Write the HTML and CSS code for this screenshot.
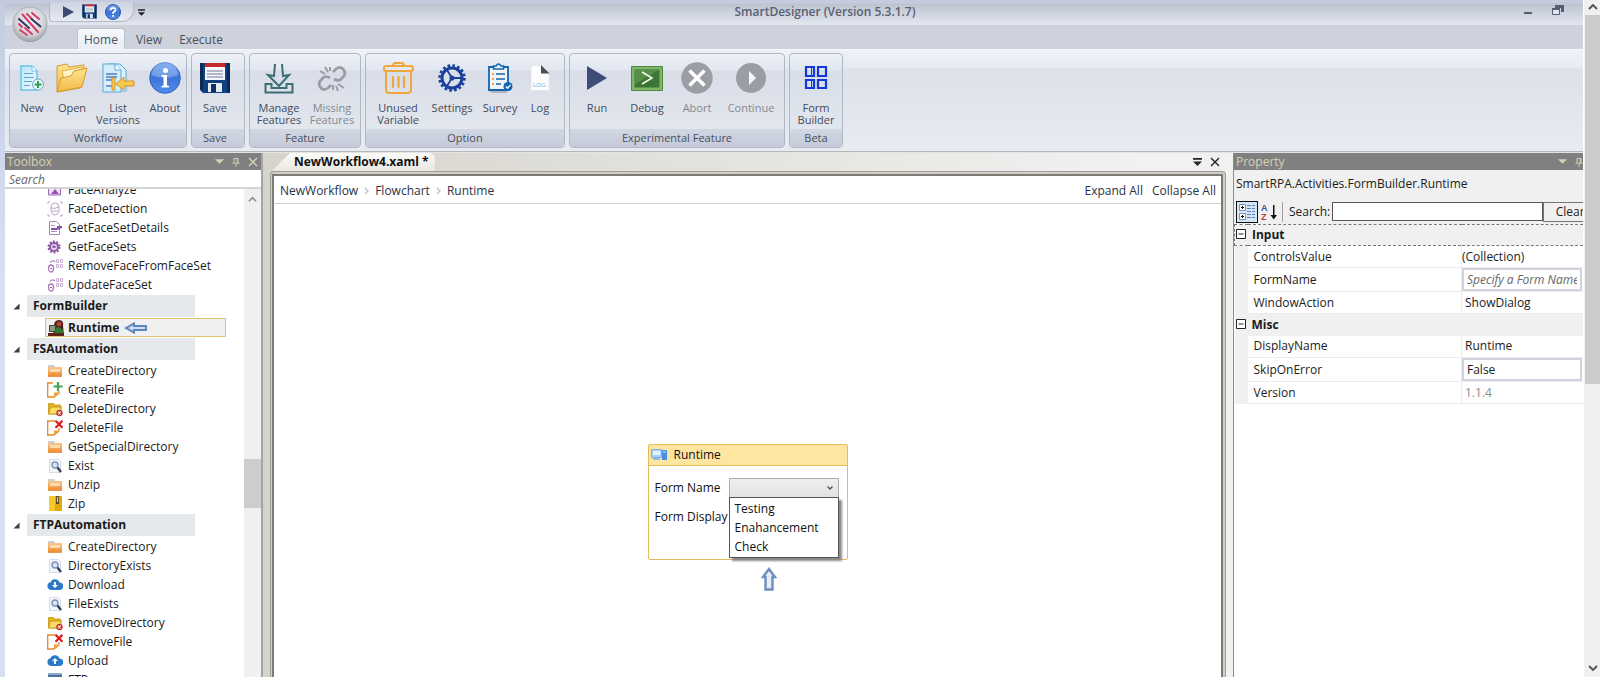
FILE: index.html
```html
<!DOCTYPE html>
<html lang="en">
<head>
<meta charset="utf-8">
<title>SmartDesigner (Version 5.3.1.7)</title>
<link rel="stylesheet" href="styles.css">
</head>
<body>
<svg class="defs" aria-hidden="true">
  <defs>
    <linearGradient id="gFolder" x1="0" y1="0" x2="0" y2="1"><stop offset="0" stop-color="#fde48c"/><stop offset="1" stop-color="#f2b94a"/></linearGradient>
    <linearGradient id="gOrange" x1="0" y1="0" x2="0" y2="1"><stop offset="0" stop-color="#fbc68a"/><stop offset="1" stop-color="#f08c30"/></linearGradient>
    <linearGradient id="gBlue" x1="0" y1="0" x2="0" y2="1"><stop offset="0" stop-color="#7aa6ee"/><stop offset=".5" stop-color="#3f73d8"/><stop offset="1" stop-color="#4f8df0"/></linearGradient>
    <linearGradient id="gSheet" x1="0" y1="0" x2="1" y2="1"><stop offset="0" stop-color="#b9e6fa"/><stop offset="1" stop-color="#f2fbff"/></linearGradient>
    <radialGradient id="gOrb" cx=".5" cy=".4" r=".6"><stop offset="0" stop-color="#f4f4f6"/><stop offset=".7" stop-color="#d2d4d8"/><stop offset="1" stop-color="#a0a3a8"/></radialGradient>
    <symbol id="floppy" viewBox="0 0 32 32"><path fill="#11407e" d="M1 1h30v30H4l-3-3z"/><path fill="#0a2a58" d="M28 1h3v30h-3zM1 1h3v27l-3-1z"/><path fill="#f4f6fa" d="M6 2h20v16H6z"/><path fill="#c8292e" d="M6 1h20v4H6z"/><path stroke="#9aa4b8" stroke-width="1.4" d="M8 9h16M8 12h16M8 15h16"/><path fill="#e6ebf2" d="M9 21h14v9H9z"/><path fill="#12305e" d="M12 22h5v8h-5z"/></symbol>
    <symbol id="folder" viewBox="0 0 16 16"><path fill="#c9ced6" d="M1 2h6l1 2h7v8H1z"/><path fill="url(#gOrange)" d="M1 4h14v9H1z"/><path fill="#fbdcb0" d="M3 6h10v3H3z"/><path stroke="#e89850" d="M1 13.500h14"/></symbol>
    <symbol id="folderx" viewBox="0 0 16 16"><path fill="#e5b51f" stroke="#cfa22a" d="M1.500 2.500h5l1 1.500h6v9h-12z"/><path fill="#fbdc63" stroke="#c79a1c" d="M1.500 13l2-7h11l-1.500 7z"/><circle cx="12.500" cy="12" r="3.200" fill="#c9362c"/><path stroke="#fff" stroke-width="1.100" d="M11.200 10.700l2.600 2.600m0-2.600l-2.600 2.600"/></symbol>
    <symbol id="filex" viewBox="0 0 16 16"><path fill="#fff" stroke="#e8872a" stroke-width="1.300" d="M8 1H.700v14H7l5-4V8"/><path fill="#f0a040" d="M7 15.500v-5h6z"/><path stroke="#d8161c" stroke-width="2.200" d="M8.500 .800l7 7M15.500 .800l-7 7"/></symbol>
    <symbol id="fileplus" viewBox="0 0 16 16"><path fill="#fff" stroke="#e8872a" stroke-width="1.300" d="M6 1H.700v14H7l5-4V9"/><path fill="#f0a040" d="M7 15.500v-5h6z"/><path stroke="#3fa654" stroke-width="2.200" d="M11 0v9M6.500 4.500h9"/></symbol>
    <symbol id="find" viewBox="0 0 16 16"><path fill="#f2f5f9" stroke="#d5dde8" d="M2.500 1.500h9l2 2v11h-11z"/><circle cx="8" cy="7" r="3" fill="#d6e5f7" stroke="#7f94b5" stroke-width="1.400"/><path stroke="#2c3e5c" stroke-width="2.200" d="M10.500 9.500L14 14"/></symbol>
    <symbol id="zip" viewBox="0 0 16 16"><path fill="#e0a90e" d="M2 0h13v15H2z"/><path fill="#f7c92b" d="M2 0h6v15H2z"/><path fill="#5a4c2c" d="M9 0h3v8H9z"/><path fill="#d9d2bd" d="M10 1h1v5h-1z"/></symbol>
    <symbol id="cloud" viewBox="0 0 16 16"><path fill="#2a7acb" d="M4 13a3.900 3.900 0 0 1-.500-7.700A4.800 4.800 0 0 1 12.500 5.600 3.700 3.700 0 0 1 12.500 13z"/></symbol>
    <symbol id="remap" viewBox="0 0 16 16"><g fill="none" stroke="#c9b0d4"><path d="M9.500 1.500h2v3h-2zM13.500 1.500h2v3h-2zM9.500 6.500h2v3h-2zM13.500 6.500h2v3h-2z"/><ellipse cx="4" cy="10.500" rx="2.500" ry="3.500" stroke="#a477b6" stroke-width="1.300"/><path stroke="#8e5fa6" d="M3 4.500q2-3 5-1M3 10.500h2"/></g></symbol>
    <symbol id="chevup" viewBox="0 0 10 10"><path fill="none" stroke="currentColor" stroke-width="1.800" d="M1 7l4-4 4 4"/></symbol>
    <symbol id="pin" viewBox="0 0 10 12"><path fill="none" stroke="currentColor" stroke-width="1.200" d="M2.500 7V1.500h5V7M.500 7.500h9M5 7.500V12M6.500 2v5"/></symbol>
    <symbol id="cross" viewBox="0 0 10 10"><path stroke="currentColor" stroke-width="1.400" d="M1 1l8 8M9 1L1 9"/></symbol>
    <symbol id="tri" viewBox="0 0 8 8"><path fill="#404040" d="M7.500 .500v7h-7z"/></symbol>
    <symbol id="down" viewBox="0 0 8 4"><path fill="currentColor" d="M0 0h8L4 4z"/></symbol>
    <symbol id="menu" viewBox="0 0 10 9"><path fill="currentColor" d="M0 0h10v2H0zM0 4h10L5 9z"/></symbol>
  </defs>
</svg>
<div class="screen">
  <div class="window">
    <header class="titlebar">
      <div class="qat-area">
        <div class="qat">
          <button class="plain" aria-label="Run"><svg width="12" height="12" viewBox="0 0 12 12"><path fill="#3c4a74" d="M1 0l11 6-11 6z"/></svg></button>
          <button class="plain" aria-label="Save"><svg width="15" height="15"><use href="#floppy"/></svg></button>
          <button class="plain" aria-label="Help"><svg width="16" height="16" viewBox="0 0 16 16"><circle cx="8" cy="8" r="7.500" fill="url(#gBlue)" stroke="#2c56b4"/><path fill="none" stroke="#fff" stroke-width="1.800" d="M5.500 6.200Q5.700 3.800 8 3.800T10.500 6Q10.500 7.200 8.100 8.500V9.800"/><circle cx="8.100" cy="12" r="1.100" fill="#fff"/></svg></button>
        </div>
        <button class="plain" aria-label="Customize toolbar"><svg class="ink" width="7" height="7"><use href="#menu"/></svg></button>
      </div>
      <h1 class="title">SmartDesigner (Version 5.3.1.7)</h1>
      <div class="winbtns">
        <button class="plain" aria-label="Minimize"><svg width="9" height="12" viewBox="0 0 9 12"><path fill="#555d70" d="M0 7h8v2H0z"/></svg></button>
        <button class="plain" aria-label="Restore"><svg width="12" height="12" viewBox="0 0 12 12"><path fill="#555d70" d="M3 0h9v7H9V3H3z"/><path fill="#e2e6ee" stroke="#555d70" d="M.500 3.500h7v6h-7z"/><path fill="#555d70" d="M0 3h8v2H0z"/></svg></button>
      </div>
    </header>
    <button class="orb" aria-label="Application menu"><svg width="36" height="37" viewBox="0 0 36 37"><circle cx="18" cy="19" r="17" fill="#858a92"/><circle cx="18" cy="18" r="17" fill="url(#gOrb)" stroke="#aeb1b6"/><g stroke-width="2" stroke-linecap="round" stroke="#d63a6a"><path d="M10.500 8.500L26 26M15 8l5 5M20 7l7 6M7 18l3 3M8 24l7 5M13 22l7 6"/></g><g stroke-width="2" stroke-linecap="round" stroke="#2e3a5c"><path d="M7 13l10 9M19.500 13l9 7.500"/></g></svg></button>
    <nav class="tabs">
      <button class="tab active">Home</button>
      <button class="tab">View</button>
      <button class="tab">Execute</button>
    </nav>
    <div class="ribbon">
      <section class="group">
        <div class="cmds lead">
          <button class="cmd w40"><svg width="32" height="32" viewBox="0 0 32 32"><path fill="url(#gSheet)" stroke="#6fc3e6" stroke-width="1.500" d="M5 4h11l5 5v19H5z"/><path fill="#fff" stroke="#6fc3e6" d="M16 4v5h5"/><path stroke="#5fa8cc" d="M8 11.500h9M8 15.500h10M8 19.500h8M8 23.500h6"/><circle cx="22" cy="22.500" r="5.500" fill="#e8f6fb" stroke="#68a8c8"/><path stroke="#2fa04c" stroke-width="2" d="M22 19v7M18.500 22.500h7"/></svg><span>New</span></button>
          <button class="cmd w40"><svg width="34" height="32" viewBox="0 0 34 32"><path fill="url(#gFolder)" stroke="#d79a32" d="M2 30V4l10-2 2 3 15-2 0 5-4 18z"/><path fill="#fff4c6" stroke="#e0b050" d="M7 9l20-4v8l-18 4z"/><path fill="url(#gFolder)" stroke="#d79a32" d="M2 30l4-14 10-2 3-5 13-3-5 19z"/></svg><span>Open</span></button>
          <button class="cmd w52"><svg width="34" height="32" viewBox="0 0 34 32"><path fill="url(#gSheet)" stroke="#5ca8d8" d="M8 2h11l6 6v21H8z"/><path fill="#d2ecfa" stroke="#5ca8d8" d="M2 2h12l6 6v22H2z"/><path fill="#fff" stroke="#5ca8d8" d="M14 2v6h6"/><path stroke="#4f7fc0" stroke-width="1.400" d="M5 12h11M5 15h11M5 18h8M5 24h6"/><path stroke="#e8eef4" stroke-width="3" d="M5 21h7"/><path fill="#fbc94a" stroke="#cf9430" d="M15 22l8-7v4h10v5H23v4zM11 16h3v12h-3z"/></svg><span>List<br>Versions</span></button>
          <button class="cmd w42"><svg width="32" height="32" viewBox="0 0 32 32"><circle cx="16" cy="16" r="15.300" fill="url(#gBlue)" stroke="#3460ba"/><path fill="#8db4f2" opacity=".6" d="M3 13a13 13 0 0 1 26 0q-13 6-26 0z"/><circle cx="16.500" cy="8.500" r="2.500" fill="#fff"/><path fill="#fff" d="M12.500 13H18v10.500l2 .500v1.500h-7.500V24l2-.500V15l-2-.500z"/></svg><span>About</span></button>
        </div>
        <div class="caption">Workflow</div>
      </section>
      <section class="group trail">
        <div class="cmds"><button class="cmd w46"><svg width="32" height="32"><use href="#floppy"/></svg><span>Save</span></button></div>
        <div class="caption">Save</div>
      </section>
      <section class="group">
        <div class="cmds pad2">
          <button class="cmd w54"><svg width="32" height="32" viewBox="0 0 32 32"><path fill="none" stroke="#3c6e74" stroke-width="2" d="M12 2L11 14l-6-1 11 11 10-11-6 1-1-12M2.500 22h6v4h15v-4h6v8.500h-27z"/></svg><span>Manage<br>Features</span></button>
          <button class="cmd w52 off"><svg width="32" height="32" viewBox="0 0 32 32"><g fill="none" stroke="#9a9da4" stroke-width="2.800"><path d="M17 10l3-3q4-3 7 0t1 7l-4 4q-3 1-6-1M15 23l-3 3q-4 3-7 0t-1-7l4-4q3-1 6 1"/><path stroke-width="2" d="M4 9l5 3M9 5l3 5M14 5v4M22 22l6 4M20 24l2 5M17 23v5"/></g></svg><span>Missing<br>Features</span></button>
        </div>
        <div class="caption">Feature</div>
      </section>
      <section class="group">
        <div class="cmds pad5">
          <button class="cmd w54"><svg width="32" height="32" viewBox="0 0 32 32"><g fill="none" stroke="#f0a63a" stroke-width="2"><rect x="2" y="4" width="29" height="5" rx="2"/><path d="M11 4q0-3 3-3h5q3 0 3 3M4 9v19q0 3 3 3h19q3 0 3-3V9"/><path stroke-width="2.200" d="M11 15v10M16.500 15v10M22 15v10" stroke-linecap="round"/></g></svg><span>Unused<br>Variable</span></button>
          <button class="cmd w54"><svg width="32" height="32" viewBox="0 0 32 32"><circle cx="16" cy="16" r="12.300" fill="none" stroke="#1a429c" stroke-width="3" stroke-dasharray="2.600 2.230"/><circle cx="16" cy="16" r="10" fill="none" stroke="#1a429c" stroke-width="3"/><circle cx="16" cy="16" r="2.600" fill="#1a429c"/><path stroke="#1a429c" stroke-width="1.800" d="M16 16h9M16 16l-5-8M16 16l-5 8"/></svg><span>Settings</span></button>
          <button class="cmd w42"><svg width="32" height="32" viewBox="0 0 32 32"><path fill="#b0b4bc" d="M5 29h18v2H8z"/><path fill="#f1f5fb" stroke="#1465ae" stroke-width="1.800" d="M5 5h19v23H5z"/><path fill="#f1f5fb" stroke="#1465ae" stroke-width="1.600" d="M9.500 7V4H12q2.500-4 5 0h2.500v3z"/><path stroke="#1465ae" stroke-width="1.500" d="M12 12h9M12 17h9M12 22h5"/><path stroke="#f0a040" stroke-width="2" d="M8 12h2M8 17h2M8 22h2"/><circle cx="24" cy="24.500" r="4.500" fill="#1465ae"/><path fill="none" stroke="#fff" stroke-width="1.300" d="M21.800 24.500l1.700 1.700 3-3.300"/></svg><span>Survey</span></button>
          <button class="cmd w38"><svg width="32" height="32" viewBox="0 0 32 32"><path fill="#fdfdfe" stroke="#e2e6ee" d="M7 3.500h10l8 8v17H7z"/><path fill="#4a4d54" d="M17 3l8.500 8.500H17z"/><text x="9" y="25" class="logtext">LOG</text></svg><span>Log</span></button>
        </div>
        <div class="caption">Option</div>
      </section>
      <section class="group">
        <div class="cmds pad3">
          <button class="cmd w48"><svg width="32" height="32" viewBox="0 0 32 32"><path fill="#3e4c78" d="M6 4l20 12L6 28z"/></svg><span>Run</span></button>
          <button class="cmd w52"><svg width="32" height="32" viewBox="0 0 32 32"><path fill="#7fb568" stroke="#4d8a3a" d="M.500 4.500h31v24H.500z"/><path fill="#3c7636" d="M3.500 7.500h25v18h-25z"/><path fill="#569048" d="M4 8h24L4 22z"/><path fill="none" stroke="#f2fbe8" stroke-width="1.600" d="M11 10l10 6-10 6"/></svg><span>Debug</span></button>
          <button class="cmd w48 off"><svg width="32" height="32" viewBox="0 0 32 32"><circle cx="16" cy="16" r="15.700" fill="#9a9da3"/><path stroke="#fff" stroke-width="3.600" d="M8.500 8.500l15 15M23.500 8.500l-15 15"/></svg><span>Abort</span></button>
          <button class="cmd w60 off"><svg width="32" height="32" viewBox="0 0 32 32"><circle cx="16" cy="16" r="15" fill="#9a9da3"/><path fill="#f4f6fa" d="M14 9l7 7-7 7z"/></svg><span>Continue</span></button>
        </div>
        <div class="caption">Experimental Feature</div>
      </section>
      <section class="group">
        <div class="cmds"><button class="cmd w52"><svg width="32" height="32" viewBox="0 0 32 32"><g fill="none" stroke="#1238e0" stroke-width="2.200"><path d="M6 5h8v9H6zM18 5h8v9h-8zM6 18h8v8H6zM18 18h8v8h-8z"/><path stroke-width="1" d="M11.500 6v8M11.500 18v8"/></g></svg><span>Form<br>Builder</span></button></div>
        <div class="caption">Beta</div>
      </section>
    </div>

    <main class="dock">
      <aside class="toolbox">
        <div class="panehead"><h2>Toolbox</h2>
          <button class="plain" aria-label="Options"><svg width="9" height="5"><use href="#down"/></svg></button>
          <button class="plain" aria-label="Pin"><svg width="8" height="10"><use href="#pin"/></svg></button>
          <button class="plain" aria-label="Close"><svg width="10" height="10"><use href="#cross"/></svg></button>
        </div>
        <input class="tbsearch" type="text" placeholder="Search" aria-label="Search toolbox">
        <div class="treebox">
          <div class="tree">
            <ul class="items">
              <li><svg viewBox="0 0 16 16"><path fill="#f0e4f4" stroke="#9c66b4" d="M1.500 2h12v11h-12z"/><path fill="#9c4fb4" d="M4 12l4-5 4 5zM7 4h2v3H7z"/></svg>FaceAnalyze</li>
              <li><svg viewBox="0 0 16 16"><g fill="none" stroke="#bfa3cb"><path d="M4 6q0-4 4-4t4 4v4q-1 4-4 4t-4-4zM4 7q4 1 8-1M5 10h6"/><path d="M1 3V1h2M13 1h2v2M1 13v2h2M13 15h2v-2"/></g></svg>FaceDetection</li>
              <li><svg viewBox="0 0 16 16"><path fill="#fff" stroke="#a883b8" d="M2.500 1.500h7l3 3v10h-10z"/><path stroke="#b08cc0" d="M4 5.500h4M4 11.500h6"/><path fill="#8a4fa6" d="M4 8h6V6h5v2l-5 2H4z"/></svg>GetFaceSetDetails</li>
              <li><svg viewBox="0 0 16 16"><circle cx="7" cy="8" r="5.500" fill="none" stroke="#8d58a4" stroke-width="2" stroke-dasharray="2 1.450"/><circle cx="7" cy="8" r="4" fill="#eadcf0" stroke="#8d58a4" stroke-width="2"/><path stroke="#7c3f98" d="M5 8h4M7 6v3"/></svg>GetFaceSets</li>
              <li><svg><use href="#remap"/></svg>RemoveFaceFromFaceSet</li>
              <li><svg><use href="#remap"/></svg>UpdateFaceSet</li>
            </ul>
            <h3 class="cat"><svg><use href="#tri"/></svg><span>FormBuilder</span></h3>
            <div class="chosen"><svg class="rt" viewBox="0 0 16 16"><path fill="#4a1b18" d="M6 6q0-6 5-6t4 6l1 9H8z"/><circle cx="11" cy="4" r="2.500" fill="#b54434"/><path fill="#2f7a34" d="M5 8l6-1 4 3v4H5z"/><path fill="#8a9a80" stroke="#3b4a38" d="M1.500 5.500h6v6h-6z"/><path fill="#5c2218" d="M0 13h16v3H0z"/></svg>Runtime<svg class="arrow" viewBox="0 0 24 12"><path fill="#cfdced" stroke="#5a86bc" stroke-width="2" d="M2 6l8-4.500v2.500h12v4H10v2.500z"/></svg></div>
            <h3 class="cat"><svg><use href="#tri"/></svg><span>FSAutomation</span></h3>
            <ul class="items">
              <li><svg><use href="#folder"/></svg>CreateDirectory</li>
              <li><svg><use href="#fileplus"/></svg>CreateFile</li>
              <li><svg><use href="#folderx"/></svg>DeleteDirectory</li>
              <li><svg><use href="#filex"/></svg>DeleteFile</li>
              <li><svg><use href="#folder"/></svg>GetSpecialDirectory</li>
              <li><svg><use href="#find"/></svg>Exist</li>
              <li><svg><use href="#folder"/></svg>Unzip</li>
              <li><svg><use href="#zip"/></svg>Zip</li>
            </ul>
            <h3 class="cat"><svg><use href="#tri"/></svg><span>FTPAutomation</span></h3>
            <ul class="items">
              <li><svg><use href="#folder"/></svg>CreateDirectory</li>
              <li><svg><use href="#find"/></svg>DirectoryExists</li>
              <li><svg viewBox="0 0 16 16"><use href="#cloud"/><path fill="#fff" d="M7 5h2v3h2l-3 3-3-3h2z"/></svg>Download</li>
              <li><svg><use href="#find"/></svg>FileExists</li>
              <li><svg><use href="#folderx"/></svg>RemoveDirectory</li>
              <li><svg><use href="#filex"/></svg>RemoveFile</li>
              <li><svg viewBox="0 0 16 16"><use href="#cloud"/><path fill="#fff" d="M7 11h2V8h2L8 5 5 8h2z"/></svg>Upload</li>
              <li><svg viewBox="0 0 16 16"><path fill="#4f6f9c" d="M1 1h14v12H1z"/><path fill="#8fa9cc" d="M1 1h14v2H1z"/></svg>FTP</li>
            </ul>
          </div>
          <div class="tbscroll"><svg width="9" height="9"><use href="#chevup"/></svg><div class="tbthumb"></div></div>
        </div>
      </aside>

      <section class="editor">
        <div class="doctabs">
          <button class="doctab">NewWorkflow4.xaml *</button>
          <div class="doctools">
            <button class="plain" aria-label="Documents"><svg width="9" height="8"><use href="#menu"/></svg></button>
            <button class="plain" aria-label="Close document"><svg width="10" height="10"><use href="#cross"/></svg></button>
          </div>
        </div>
        <div class="docframe">
          <div class="crumbs">
            <a href="#">NewWorkflow</a><svg class="sep" viewBox="0 0 5 8"><path d="M1 1l3 3-3 3"/></svg><a href="#">Flowchart</a><svg class="sep" viewBox="0 0 5 8"><path d="M1 1l3 3-3 3"/></svg><a href="#">Runtime</a>
            <span class="grow"></span>
            <button class="plain txt">Expand All</button><button class="plain txt">Collapse All</button>
          </div>
          <div class="canvas">
            <div class="node">
              <div class="nodehead"><svg width="17" height="12" viewBox="0 0 17 12"><path fill="#a9d2f8" stroke="#7fb0ea" d="M.500 .500h10v8h-10z"/><path fill="#e2f2fd" d="M2 2h7v4H2z"/><path fill="#4d8de0" d="M11 1h5v10h-5z"/><path fill="#8fbcf2" d="M12 2h3v2h-3zM2 9h7v2H2z"/></svg>Runtime</div>
              <div class="nodebody">
                <label for="formName">Form Name</label>
                <div class="combo">
                  <select id="formName"><option></option></select>
                  <svg class="combochev" viewBox="0 0 8 6"><path fill="none" stroke="#555" stroke-width="1.400" d="M1.500 1.500L4 4l2.500-2.500"/></svg>
                  <ul class="popup" role="listbox" aria-label="Forms"><li role="option">Testing</li><li role="option">Enahancement</li><li role="option">Check</li></ul>
                </div>
                <span>Form Display</span>
              </div>
              <svg class="uparrow" viewBox="0 0 16 24"><path fill="#e6edf6" stroke="#6a8fc0" stroke-width="2.400" d="M8 2l6 8h-2.500v12.500h-7V10H2z"/></svg>
            </div>
          </div>
        </div>
      </section>

      <aside class="props">
        <div class="panehead wide"><h2>Property</h2>
          <button class="plain" aria-label="Options"><svg width="9" height="5"><use href="#down"/></svg></button>
          <button class="plain" aria-label="Pin"><svg width="8" height="10"><use href="#pin"/></svg></button>
          <button class="plain" aria-label="Close"><svg width="10" height="10"><use href="#cross"/></svg></button>
        </div>
        <p class="ptype">SmartRPA.Activities.FormBuilder.Runtime</p>
        <div class="ptools">
          <button class="catbtn" aria-label="Categorized"><svg width="18" height="18" viewBox="0 0 18 18"><path fill="#fff" stroke="#7c93b0" d="M1.500 1.500h6v6h-6zM1.500 10.500h6v6h-6z"/><path stroke="#111" d="M3 4.500h3M4.500 3v3M3 13.500h3M4.500 12v3"/><path stroke="#5f86b5" stroke-dasharray="4 1" d="M9 2.500h8M9 5.500h8M9 8.500h8M9 11.500h8M9 14.500h8"/></svg></button>
          <button class="plain az" aria-label="Alphabetical"><svg width="16" height="18" viewBox="0 0 16 18"><text x="0" y="8" class="aa">A</text><text x="0" y="17" class="zz">Z</text><path fill="#111" d="M12 2h1.500v10H16l-3.200 4.500L9.500 12H12z"/></svg></button>
          <span class="vr"></span>
          <label for="psearch">Search:</label><input id="psearch" type="text"><button class="clear">Clear</button>
        </div>
        <table class="grid">
          <colgroup><col class="cgut"><col class="ckey"><col></colgroup>
          <tbody>
            <tr class="sec dashed"><th colspan="3"><svg width="10" height="10" viewBox="0 0 10 10"><path fill="#fff" stroke="#222" d="M.500 .500h9v9h-9zM2.500 5h5"/></svg>Input</th></tr>
            <tr class="r22"><td class="gut"></td><td class="key">ControlsValue</td><td class="val tight">(Collection)</td></tr>
            <tr class="r24"><td class="gut"></td><td class="key"><label for="fn">FormName</label></td><td class="val box"><input id="fn" type="text" placeholder="Specify a Form Name"></td></tr>
            <tr class="r22"><td class="gut"></td><td class="key">WindowAction</td><td class="val">ShowDialog</td></tr>
            <tr class="sec"><th colspan="3"><svg width="10" height="10" viewBox="0 0 10 10"><path fill="#fff" stroke="#222" d="M.500 .500h9v9h-9zM2.500 5h5"/></svg>Misc</th></tr>
            <tr class="r22"><td class="gut"></td><td class="key">DisplayName</td><td class="val">Runtime</td></tr>
            <tr class="r24"><td class="gut"></td><td class="key"><label for="soe">SkipOnError</label></td><td class="val box"><input id="soe" type="text" value="False"></td></tr>
            <tr class="r22"><td class="gut"></td><td class="key">Version</td><td class="val dim">1.1.4</td></tr>
          </tbody>
        </table>
      </aside>
    </main>
  </div>
  <div class="pagescroll"><svg width="10" height="10"><use href="#chevup"/></svg><div class="pagethumb"></div><svg class="flip" width="10" height="10"><use href="#chevup"/></svg></div>
</div>
</body>
</html>
```
FILE: styles.css
```css
* { box-sizing: border-box; }
body { margin: 0; font: 12px/16px "Open Sans", "Noto Sans", sans-serif; color: #1b1b1b; }
button, input, select { font: inherit; color: inherit; margin: 0; }
ul { list-style: none; margin: 0; padding: 0; }
h1, h2, h3, p { margin: 0; font-size: 12px; font-weight: 400; }
svg { display: block; flex: none; }
a { color: inherit; text-decoration: none; }
.defs { position: absolute; width: 0; height: 0; }
.plain { border: 0; padding: 0; background: none; display: flex; align-items: center; }

.screen { display: flex; height: 100vh; overflow: hidden; background: linear-gradient(#c4cce0, #d6e0f4 40%); }
.window { flex: 1; min-width: 0; margin-left: 5px; display: flex; flex-direction: column; position: relative; background: #ced2dc; }
.pagescroll { width: 17px; padding: 2px 0 4px 1px; background: #f0f0f0; border-left: 1px solid #fff; display: flex; flex-direction: column; align-items: center; color: #505050; }
.pagethumb { width: 100%; height: 55%; margin: 3px 0 auto; background: #cbcbcb; }
.flip { transform: rotate(180deg); }

.titlebar { height: 25px; flex: none; display: flex; align-items: flex-start; background: linear-gradient(#c5cce0 0 3px, #bdc4d0 4px, #e3e7f0); }
.qat-area { width: 145px; padding-top: 2px; display: flex; align-items: center; gap: 4px; }
.qat { margin-left: 44px; width: 85px; height: 20px; padding-left: 12px; border: 1px solid #b4bac8; border-top: 0; border-radius: 0 0 12px 4px; display: flex; align-items: center; gap: 8px; background: linear-gradient(#ced4e0, #e6eaf2); }
.ink { color: #222; }
.title { flex: 1; text-align: center; font-weight: 600; line-height: 24px; color: #596071; }
.winbtns { width: 83px; padding: 5px 0 0 24px; display: flex; gap: 19px; }
.orb { position: absolute; left: 7px; top: 6px; padding: 0; border: 0; background: none; }
.tabs { height: 24px; flex: none; padding: 3px 0 0 72px; display: flex; }
.tab { border: 1px solid transparent; border-bottom: 0; padding: 2px 5px 0; background: none; color: #4a5060; border-radius: 3px 3px 0 0; margin-right: 5px; }
.tab.active { background: linear-gradient(#f6f9fc, #e9edf5); border-color: #bcc2d0; padding: 2px 6px 0; }
.ribbon { flex: none; height: 103px; padding: 3px 4px; display: flex; gap: 4px; background: linear-gradient(#edf1f8, #e6eaf2 18px, #dce1ea 19px, #e8ebf0); border-top: 1px solid #f4f7fb; border-bottom: 1px solid #b4b8be; }
.group { border: 1px solid #b0b7c6; border-radius: 4px; background: linear-gradient(#edf1f8, #e1e6f0 16px, #d8dde8 17px, #e5e9ef); display: flex; flex-direction: column; }
.cmds { flex: 1; display: flex; }
.lead { padding-left: 2px; }
.trail .cmds, .trail .caption { padding-right: 6px; }
.pad2 { padding: 0 2px; }
.pad3 { padding: 0 3px; }
.pad5 { padding: 0 5px; }
.caption { height: 18px; line-height: 17px; text-align: center; font-size: 11px; color: #474f60; background: linear-gradient(#d2d7e3, #c4cad9); border-radius: 0 0 3px 3px; }
.cmd { border: 0; background: none; padding: 8px 0 0; display: flex; flex-direction: column; align-items: center; justify-content: flex-start; gap: 8px; font-size: 11px; line-height: 12px; color: #444b5a; white-space: nowrap; }
.cmd.off { color: #85888f; }
.w38 { width: 38px; } .w40 { width: 40px; } .w42 { width: 42px; } .w46 { width: 46px; } .w48 { width: 48px; } .w52 { width: 52px; } .w54 { width: 54px; } .w60 { width: 60px; }
.logtext { font: 6px "Liberation Sans", sans-serif; fill: #70b4e8; }

.dock { flex: 1; min-height: 0; display: flex; background: #d6d3cb; border-top: 1px solid #e4e4e4; }
.toolbox { width: 258px; flex: none; display: flex; flex-direction: column; background: #fff; border-right: 2px solid #a5a5a5; }
.panehead { height: 17px; flex: none; display: flex; align-items: center; gap: 8px; padding: 0 3px 0 2px; background: #808080; color: #d6d2b4; }
.panehead h2 { flex: 1; line-height: 17px; }
.tbsearch { height: 19px; border: 0; border-bottom: 2px solid #d4d4d4; padding: 2px 4px 0; outline: 0; background: #fff; }
.tbsearch::placeholder, .grid input::placeholder { color: #666; font-style: italic; opacity: 1; }
.treebox { flex: 1; min-height: 0; display: flex; }
.tree { flex: 1; overflow: hidden; }
.items { padding: 1px 0; }
.tree > .items:first-child { margin-top: -10px; }
.items li { height: 19px; padding-left: 42px; display: flex; align-items: center; gap: 5px; white-space: nowrap; }
.items svg { width: 16px; height: 16px; }
.cat { display: flex; align-items: center; gap: 7px; height: 22px; padding-left: 8px; font-weight: 700; }
.cat svg { width: 7px; height: 7px; }
.cat span { width: 168px; height: 22px; line-height: 22px; padding-left: 6px; background: #e6e9ec; }
.chosen { height: 19px; width: 181px; margin: 1px 0 1px 40px; padding-left: 2px; display: flex; align-items: center; gap: 4px; border: 1px solid #dfc36a; background: #f0f0f0; font-weight: 700; }
.rt { width: 16px; height: 16px; }
.arrow { width: 24px; height: 12px; margin-left: 1px; }
.tbscroll { width: 17px; padding: 6px 0; display: flex; flex-direction: column; align-items: center; background: #f0f0f0; color: #909090; }
.tbthumb { width: 100%; height: 49px; margin-top: 255px; background: #cdcdcd; }

.editor { flex: 1; min-width: 0; padding: 0 7px; display: flex; flex-direction: column; background: linear-gradient(90deg, #d6d3cb, #f1f1f0 90%); }
.doctabs { height: 18px; flex: none; display: flex; align-items: center; justify-content: space-between; padding: 0 6px 0 2px; }
.doctab { height: 18px; border: 0; padding: 0 6px 0 22px; font-weight: 700; color: #111; background: linear-gradient(#fbfbf9, #e9e8e3); clip-path: polygon(18px 0, 98% 0, 100% 3px, 100% 100%, 0 100%, 8px 10px); line-height: 18px; }
.doctools { display: flex; gap: 8px; color: #222; }
.docframe { flex: 1; min-height: 0; border: 1px solid #a09e96; border-bottom: 0; border-radius: 4px 4px 0 0; padding: 2px 2px 0 1px; display: flex; flex-direction: column; background: #d0cec6; }
.crumbs { height: 30px; flex: none; display: flex; align-items: center; gap: 6px; padding: 2px 5px 0 6px; background: #fff; border: solid #7d7b74; border-width: 2px 2px 0; color: #2b3242; box-shadow: inset 0 -1px #d0d0d0; }
.sep { width: 5px; height: 8px; fill: none; stroke: #c0c4cc; stroke-width: 1.5px; }
.grow { flex: 1; }
.txt { margin-left: 3px; }
.canvas { flex: 1; min-height: 0; border: solid #7d7b74; border-width: 0 2px; background: #fff; display: flex; justify-content: center; align-items: center; }
.node { position: relative; width: 200px; height: 116px; border: 1px solid #e3bf5c; border-radius: 2px; background: #fff; color: #111; margin-top: 122px; }
.nodehead { height: 21px; display: flex; align-items: center; gap: 6px; padding-left: 2px; background: #ffe6a0; border-bottom: 1px solid #e3bf5c; }
.nodebody { display: grid; grid-template-columns: 74px 110px; grid-template-rows: 20px 38px; align-items: center; padding: 12px 0 0 6px; white-space: nowrap; }
.combo { position: relative; height: 20px; align-self: start; }
.combo select { width: 110px; height: 20px; appearance: none; border: 1px solid #acacac; border-radius: 0; background: linear-gradient(#f0f0f0, #e2e2e2); }
.combochev { position: absolute; right: 5px; top: 7px; width: 8px; height: 6px; }
.popup { position: absolute; left: 0; top: 19px; width: 110px; padding: 1px 0; background: #fff; border: 1px solid #555; box-shadow: 3px 3px 2px #8a8a8a; }
.popup li { height: 19px; line-height: 19px; padding-left: 5px; }
.uparrow { position: absolute; left: 112px; top: 121px; width: 16px; height: 26px; }

.props { width: 350px; flex: none; overflow: hidden; background: #fff; border-left: 1px solid #8c8c8c; display: flex; flex-direction: column; }
.wide { width: 370px; }
.ptype { height: 29px; padding: 6px 2px; background: #f0f0f0; }
.ptools { height: 25px; width: 370px; flex: none; display: flex; align-items: center; padding-left: 2px; background: #f0f0f0; }
.catbtn { width: 22px; height: 22px; padding: 1px; border: 1px solid #111; background: #d5e5f5; }
.az { margin-left: 3px; }
.aa { font: bold 9px "Liberation Sans", sans-serif; fill: #3556a0; }
.zz { font: bold 9px "Liberation Sans", sans-serif; fill: #c03c3c; }
.vr { width: 1px; height: 20px; margin: 0 6px 0 5px; background: #a0a0a0; }
.ptools input { width: 211px; height: 19px; margin-left: 2px; border: 1px solid #555; background: #fff; }
.clear { width: 54px; height: 20px; border: 1px solid #777; background: #f0f0f0; padding: 0; }
.grid { width: 100%; border-collapse: collapse; table-layout: fixed; }
.cgut { width: 13px; } .ckey { width: 214px; }
.grid th, .grid td { padding: 0; text-align: left; white-space: nowrap; overflow: hidden; }
.sec th { height: 22px; background: #f0f0f0; font-weight: 700; }
.sec th svg { display: inline-block; margin: 0 6px 0 1px; }
.sec.dashed th { border: 1px dashed #777; border-right: 0; height: 21px; }
.gut { background: #f0f0f0; }
.key { border-bottom: 1px solid #ececec; border-right: 1px solid #ececec; }
.grid .key { padding-left: 6px; }
.r22 td { height: 22px; } .r24 td { height: 24px; }
.val { border-bottom: 1px solid #ececec; }
.grid .val { padding-left: 3px; }
.grid .tight, .grid .box { padding-left: 0; }
.dim { color: #8c8c8c; }
.grid input { display: block; width: calc(100% - 1px); height: 23px; border: 2px solid #cfd3dd; padding: 0 3px; background: #fff; }
```
